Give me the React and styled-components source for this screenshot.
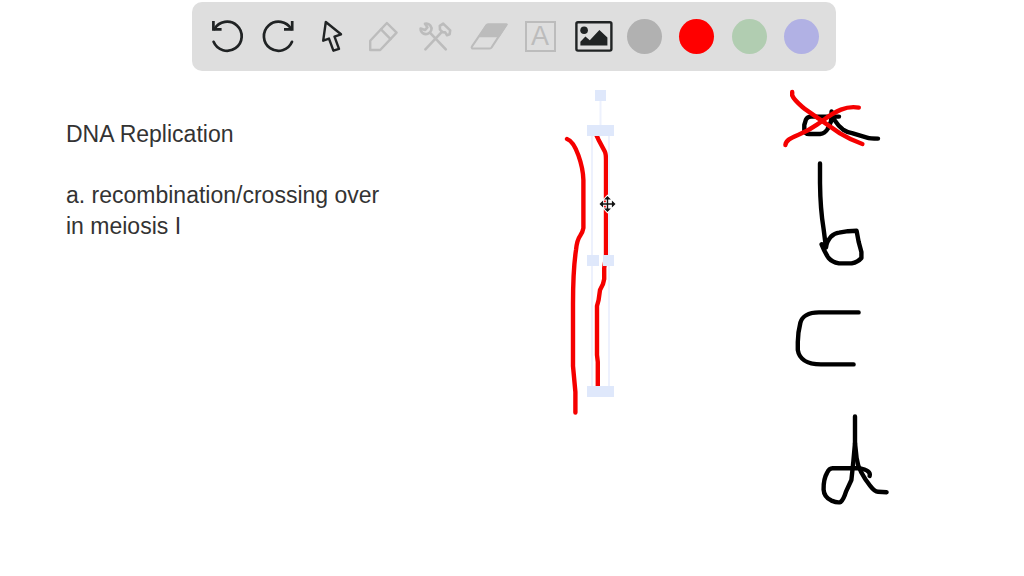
import React, { useState } from "react"
import styled, { createGlobalStyle, ThemeProvider } from "styled-components"

const theme = {
  colors: {
    background: "#ffffff",
    toolbar: "#dedede",
    icon: "#202324",
    iconMuted: "#bcbcbc",
    text: "#333333",
    handle: "#dfe8fb",
    guide: "#edf1fd",
    ink: "#000000",
    red: "#f50000",
  },
  font: `"Liberation Sans", Arial, Helvetica, sans-serif`,
}

const GlobalStyle = createGlobalStyle`
  *, *::before, *::after {
    box-sizing: border-box;
  }

  body {
    margin: 0;
    background: ${theme.colors.background};
    font-family: ${theme.font};
  }
`

const Whiteboard = styled.main`
  position: relative;
  min-height: 100vh;
  padding: 2px 0 0 4px;
  background: ${({ theme }) => theme.colors.background};
  overflow: hidden;
`

const Toolbar = styled.div`
  position: relative;
  z-index: 1;
  display: flex;
  align-items: center;
  justify-content: space-between;
  max-width: 644px;
  margin: 0 auto;
  padding: 14px;
  border-radius: 10px;
  background: ${({ theme }) => theme.colors.toolbar};
`

const Tool = styled.button`
  display: flex;
  align-items: center;
  justify-content: center;
  width: 41px;
  height: 41px;
  padding: 0;
  border: none;
  background: none;
  color: ${({ theme, $muted }) => ($muted ? theme.colors.iconMuted : theme.colors.icon)};
  cursor: pointer;
`

const Icon = styled.svg`
  display: block;
  width: 41px;
  height: 41px;
  fill: none;
  stroke: currentColor;
  stroke-width: ${({ $weight }) => $weight || 2.4};
  stroke-linecap: round;
  stroke-linejoin: round;
`

const LetterBox = styled.span`
  display: flex;
  align-items: center;
  justify-content: center;
  width: 31px;
  height: 31px;
  border: 2px solid currentColor;
  font-family: ${({ theme }) => theme.font};
  font-size: 27px;
  line-height: 27px;
`

const Swatch = styled.span`
  width: 35px;
  height: 35px;
  border-radius: 50%;
  background: ${({ $color }) => $color};
`

const Note = styled.section`
  max-width: 400px;
  padding: 48px 20px 0 62px;
  color: ${({ theme }) => theme.colors.text};
  font-size: 23px;
  line-height: 31px;

  h1 {
    margin: 0 0 30px;
    font-size: 23px;
    font-weight: 400;
    line-height: 31px;
  }

  p {
    margin: 0;
  }
`

// Freehand layer lying over the whole board
const InkLayer = styled.svg`
  position: absolute;
  inset: 0;
  width: 100%;
  height: 100%;
  pointer-events: none;
`

const Stroke = styled.path`
  fill: none;
  stroke: ${({ theme, $red }) => ($red ? theme.colors.red : theme.colors.ink)};
  stroke-width: 4.4;
  stroke-linecap: round;
  stroke-linejoin: round;
`

const Handle = styled.rect`
  fill: ${({ theme }) => theme.colors.handle};
`

const Guide = styled.path`
  fill: none;
  stroke: ${({ theme }) => theme.colors.guide};
  stroke-width: 2;
`

const UndoIcon = () => (
  <Icon $weight={2.7}>
    <path d="M7.6 25.8A14.6 14.6 0 1 0 8.4 13" />
    <path d="M7.4 5V13.4H15.6" strokeLinecap="butt" strokeLinejoin="miter" />
  </Icon>
)

const RedoIcon = () => (
  <Icon $weight={2.7}>
    <path d="M34 25.8A14.6 14.6 0 1 1 33.2 13" />
    <path d="M34.2 5V13.4H26" strokeLinecap="butt" strokeLinejoin="miter" />
  </Icon>
)

const PointerIcon = () => (
  <Icon>
    <path d="M14.8 6L12.2 24.7L18 22.6L22.4 34.7L28 32.8L23.5 20.6L30 18.3Z" />
  </Icon>
)

const PencilIcon = () => (
  <Icon>
    <path d="M7.2 34V24.7L23.9 7L33.6 16.7L17.2 34Z" />
    <path d="M18 13.4L27.6 23.2" />
  </Icon>
)

const ToolsIcon = () => (
  <Icon $weight={2.6}>
    <path d="M5.6 12.6C5.4 16.4 9.2 19 12.8 17.8C16.4 16.4 17.6 12.4 15.4 9.6C14 7.8 12 7.2 10 7.8L12.4 11.4L10 14L5.6 12.6" />
    <path d="M15.6 17.4L30.8 33.4" />
    <path d="M24.8 9.8L28.2 7.6L35.2 14.4L34.6 18.2L32 19.2L30.2 16.4L27.6 16.2L25 13.6Z" />
    <path d="M26.6 16.2L10.4 33.4" />
  </Icon>
)

const EraserIcon = () => (
  <Icon $weight={2}>
    <path d="M5 32.4Q4.2 31.6 5 30.4L19.4 9.4Q20.2 8.4 21.4 8.4H39.6L24.6 31.4Q24 32.4 22.6 32.4Z" />
    <path d="M12.6 20.2L19.4 9.4Q20.2 8.4 21.4 8.4H39.6L31.8 20.2Z" fill="currentColor" />
  </Icon>
)

const PictureIcon = () => (
  <Icon>
    <rect x="4.4" y="6.2" width="35" height="28.4" rx="1.6" />
    <circle cx="12.1" cy="14.3" r="3.8" fill="currentColor" stroke="none" />
    <path
      d="M8.4 29.6V25.8L13.4 20.6L17.8 24.2L27.4 14L35.4 21.6V29.6Z"
      fill="currentColor"
      stroke="none"
    />
  </Icon>
)

const tools = [
  { name: "Undo", icon: <UndoIcon /> },
  { name: "Redo", icon: <RedoIcon /> },
  { name: "Select", icon: <PointerIcon /> },
  { name: "Pencil", icon: <PencilIcon />, muted: true },
  { name: "Tools", icon: <ToolsIcon />, muted: true },
  { name: "Eraser", icon: <EraserIcon />, muted: true },
  { name: "Text", icon: <LetterBox>A</LetterBox>, muted: true },
  { name: "Image", icon: <PictureIcon /> },
]

const swatches = [
  { name: "Gray", color: "#b1b1b1" },
  { name: "Red", color: "#ff0000" },
  { name: "Green", color: "#b1cdb1" },
  { name: "Blue", color: "#b1b1e4" },
]

const Letters = () => (
  <g>
    <Stroke d="M839 116.6H811Q807.4 116.6 806 119.4L804.3 125V130Q805 134 809 134H820Q825 133.4 827.6 129L831 121.5L831.6 111.4L834 119.4C837 124 840 127.4 843 129.6Q847 132.2 852 133.2L867 137.6Q870 138.6 878 138.6" />
    <Stroke d="M820 163.4V183C820.2 200 821.6 217 823.6 229L826 247.6Q826.6 241.6 831 236.6Q834.6 233 839 232.6L848 231.2L856.6 230.8L858.6 241.6L861.4 252V258Q858 262 851.6 263.4H839Q832 262 828.6 258Q825 253 821.6 244.4" />
    <Stroke d="M858.6 312.4H819C808 312.4 802 317 800.4 322.6Q797.8 333 797.8 342V350C799 358 806 364.4 821 364.4H853.6" />
    <Stroke d="M855 416.4V443L853.4 461L851.4 480L846 491.6Q843.6 499.6 840.6 502Q838 503.2 831.4 500.6Q824 497 823.6 489.6Q823.4 479 827 473Q829 468.2 832.6 468.2H859Q871.4 470.4 869.6 476" />
    <Stroke d="M855 443L856.6 458Q857.6 466 861.4 472.6Q865 479.6 870 485.6Q874.6 491.6 878 491.8L886.6 492.2" />
    <Stroke $red d="M792.2 92V95.4C794 100 799 104 804 108.4L821.6 120.6L840 133.4Q850 139.6 862.4 144" />
    <Stroke $red d="M858.8 107.6Q850 106 841 109.6C832 113 825 119 817 124.6Q808 131 798 135C791 138 786 140 785.4 145" />
  </g>
)

const Strands = () => (
  <g>
    <Stroke $red d="M567 139C576 142 583 166 583.4 180V228Q582.8 232 580 236Q577 240 576 250C573.6 266 573 284 573 304V366L575.4 392V412.6" />
    <Stroke $red d="M595 132L598.4 139.4L604.8 151.6Q606 154 606 160V256L604.2 268V279L603 284L600 290L598.6 300L597 306V355L597.8 362V386" />
  </g>
)

const Selection = () => (
  <g>
    <Guide d="M600.5 101V125M592 136V386M609 136V386" />
    <Handle x="595" y="90" width="11" height="11" />
    <Handle x="587" y="125" width="27" height="11" />
    <Handle x="587" y="255" width="12" height="11" />
    <Handle x="603" y="255" width="11" height="11" />
    <Handle x="587" y="386" width="27" height="11" />
  </g>
)

// Four-way move cursor
const MoveCursor = () => (
  <g transform="translate(607.5 204)">
    <path
      d="M0 -8L3.4 -4.4H0.7V-0.7H4.4V-3.4L8 0L4.4 3.4V0.7H0.7V4.4H3.4L0 8L-3.4 4.4H-0.7V0.7H-4.4V3.4L-8 0L-4.4 -3.4V-0.7H-0.7V-4.4H-3.4Z"
      fill="#111111"
      stroke="#ffffff"
      strokeWidth="2"
      paintOrder="stroke"
    />
  </g>
)

const App = () => {
  const [active, setActive] = useState("Select")

  return (
    <ThemeProvider theme={theme}>
      <GlobalStyle />
      <Whiteboard>
        <Toolbar role="toolbar" aria-label="Drawing tools">
          {tools.map(({ name, icon, muted }) => (
            <Tool
              key={name}
              type="button"
              aria-label={name}
              aria-pressed={active === name}
              $muted={muted}
              onClick={() => setActive(name)}
            >
              {icon}
            </Tool>
          ))}
          {swatches.map(({ name, color }) => (
            <Tool key={name} type="button" aria-label={name}>
              <Swatch $color={color} />
            </Tool>
          ))}
        </Toolbar>
        <Note>
          <h1>DNA Replication</h1>
          <p>a. recombination/crossing over in meiosis I</p>
        </Note>
        <InkLayer aria-hidden="true">
          <Letters />
          <Strands />
          <Selection />
          <MoveCursor />
        </InkLayer>
      </Whiteboard>
    </ThemeProvider>
  )
}

export default App
